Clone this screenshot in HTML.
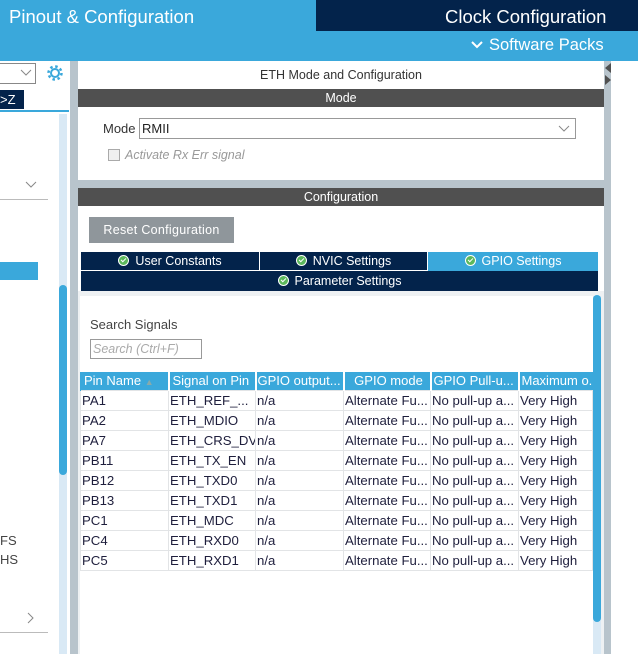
<!DOCTYPE html>
<html><head><style>
*{margin:0;padding:0;box-sizing:border-box}
body{width:638px;height:654px;overflow:hidden;background:#fff;font-family:"Liberation Sans",sans-serif;position:relative;color:#333}
.a{position:absolute}
.t{font-size:13px;white-space:nowrap}
table{border-collapse:collapse;table-layout:fixed;width:512px;position:absolute;left:80px;top:372px;font-size:13.2px;color:#1e1e3c}
td{height:20px;border:1px solid #e2e4e6;padding:0 0 0 1px;white-space:nowrap;overflow:hidden}
th{height:18px;background:#3aa8db;color:#fff;font-weight:normal;border-left:2px solid #fff;text-align:left;padding:0 0 0 3px;white-space:nowrap;overflow:hidden;font-size:13px}
.ok{display:inline-block;width:11px;height:11px;border-radius:50%;background:#5cb85c;vertical-align:-1px;margin-right:6px;position:relative;border:1px solid #fff}
.ok:after{content:"";position:absolute;left:2px;top:1.5px;width:4px;height:2px;border-left:1.6px solid #fff;border-bottom:1.6px solid #fff;transform:rotate(-45deg)}
</style></head><body>
<div class="a" style="left:0;top:0;width:638px;height:61px;background:#3aa8db"></div>
<div class="a" style="left:316px;top:0;width:322px;height:31px;background:#03234b"></div>
<div class="a" style="left:9px;top:6px;color:#fff;font-size:18.5px">Pinout &amp; Configuration</div>
<div class="a" style="left:445px;top:6px;color:#fff;font-size:18.5px">Clock Configuration</div>
<div class="a" style="left:471px;top:36px;color:#fff;font-size:16.5px"><svg width="12" height="10" style="margin-right:6px"><path d="M1 2 L6 7 L11 2" stroke="#fff" stroke-width="2" fill="none"/></svg>Software Packs</div>
<!-- left panel -->
<div class="a" style="left:0;top:63px;width:36px;height:21px;border:1px solid #888;border-left:none"></div>
<svg class="a" style="left:20px;top:69px" width="12" height="8"><path d="M1 1 L6 6 L11 1" stroke="#888" fill="none"/></svg>
<svg class="a" style="left:46px;top:64px" width="18" height="18"><circle cx="9" cy="9" r="4" stroke="#3aa8db" stroke-width="2" fill="none"/><circle cx="9" cy="9" r="6.5" stroke="#3aa8db" stroke-width="2.5" fill="none" stroke-dasharray="2.5 2.6"/></svg>
<div class="a" style="left:0;top:90px;width:24px;height:19px;background:#03234b;color:#fff;font-size:13px;line-height:19px">&gt;Z</div>
<div class="a" style="left:0;top:110px;width:69px;height:2px;background:#3aa8db"></div>
<svg class="a" style="left:25px;top:181px" width="12" height="8"><path d="M1 1 L6 6 L11 1" stroke="#888" fill="none"/></svg>
<div class="a" style="left:0;top:199px;width:48px;height:1px;background:#bbb"></div>
<div class="a" style="left:0;top:262px;width:38px;height:18px;background:#3aa8db"></div>
<div class="a t" style="left:0;top:533px;font-size:13px;color:#444">FS</div>
<div class="a t" style="left:0;top:552px;font-size:13px;color:#444">HS</div>
<svg class="a" style="left:27px;top:612px" width="8" height="12"><path d="M1 1 L6 6 L1 11" stroke="#888" fill="none"/></svg>
<div class="a" style="left:0;top:632px;width:48px;height:1px;background:#bbb"></div>
<div class="a" style="left:59px;top:114px;width:8px;height:540px;background:#d9e9f5"></div>
<div class="a" style="left:59px;top:285px;width:8px;height:190px;background:#3aa8db;border-radius:4px"></div>
<div class="a" style="left:70px;top:61px;width:8px;height:593px;background:#b8c4cc"></div>
<!-- main -->
<div class="a t" style="left:78px;top:68px;width:526px;text-align:center;font-size:12.5px;color:#333">ETH Mode and Configuration</div>
<div class="a" style="left:78px;top:89px;width:526px;height:18px;background:#505050;color:#fff;font-size:12.5px;text-align:center;line-height:18px">Mode</div>
<div class="a t" style="left:103px;top:121px;color:#333">Mode</div>
<div class="a" style="left:139px;top:118px;width:437px;height:21px;border:1px solid #999;font-size:13px;line-height:19px;padding-left:2px;color:#222">RMII</div>
<svg class="a" style="left:558px;top:125px" width="12" height="8"><path d="M1 1 L6 6 L11 1" stroke="#888" fill="none"/></svg>
<div class="a" style="left:108px;top:149px;width:12px;height:12px;border:1px solid #aaa;background:#f0f0f0"></div>
<div class="a t" style="left:125px;top:148px;font-style:italic;color:#999;font-size:12.5px">Activate Rx Err signal</div>
<div class="a" style="left:78px;top:180px;width:526px;height:8px;background:#b8c4cc"></div>
<div class="a" style="left:78px;top:188px;width:526px;height:18px;background:#505050;color:#fff;font-size:12.5px;text-align:center;line-height:18px">Configuration</div>
<div class="a" style="left:89px;top:217px;width:145px;height:26px;background:#8f969b;color:#fff;font-size:12.5px;text-align:center;line-height:26px;letter-spacing:.3px">Reset Configuration</div>
<div class="a" style="left:81px;top:252px;width:178px;height:18px;background:#03234b;color:#fff;font-size:12.5px;text-align:center;line-height:18px"><span class="ok"></span>User Constants</div>
<div class="a" style="left:260px;top:252px;width:167px;height:18px;background:#03234b;color:#fff;font-size:12.5px;text-align:center;line-height:18px"><span class="ok"></span>NVIC Settings</div>
<div class="a" style="left:428px;top:252px;width:170px;height:20px;background:#3aa8db;color:#fff;font-size:12.5px;text-align:center;line-height:18px"><span class="ok"></span>GPIO Settings</div>
<div class="a" style="left:81px;top:271px;width:517px;height:20px;background:#03234b;color:#fff;font-size:12.5px;text-align:center;line-height:20px"><span class="ok"></span>Parameter Settings</div>
<div class="a" style="left:78px;top:291px;width:526px;height:5px;background:#eef1f3"></div>
<div class="a" style="left:78px;top:291px;width:2px;height:363px;background:#eef1f3"></div>
<div class="a" style="left:593px;top:296px;width:8px;height:358px;background:#d9e9f5"></div>
<div class="a" style="left:593px;top:295px;width:8px;height:327px;background:#3aa8db;border-radius:4px"></div>
<div class="a" style="left:601px;top:291px;width:4px;height:363px;background:#eef1f3"></div>
<div class="a" style="left:604px;top:61px;width:7px;height:593px;background:#b8c4cc"></div>
<svg class="a" style="left:604px;top:63px" width="7" height="30"><path d="M7 0 L1 5 L7 10Z M1 12 L7 17 L1 22Z" fill="#505050"/></svg>
<div class="a t" style="left:90px;top:317px;color:#444">Search Signals</div>
<div class="a" style="left:90px;top:339px;width:112px;height:20px;border:1px solid #999;font-style:italic;color:#aaa;font-size:12.5px;line-height:18px;padding-left:2px">Search (Ctrl+F)</div>
<table>
<colgroup><col style="width:88px"><col style="width:87px"><col style="width:88px"><col style="width:87px"><col style="width:88px"><col style="width:74px"></colgroup>
<tr><th style="border-left:1px solid #3aa8db">Pin Name <span style="color:#8aa;font-size:9px">&#9650;</span></th><th>Signal on Pin</th><th style="padding-left:1px">GPIO output...</th><th style="text-align:center">GPIO mode</th><th style="padding-left:2px">GPIO Pull-u...</th><th style="padding-left:2px">Maximum o.</th></tr>
<tr><td>PA1</td><td>ETH_REF_...</td><td>n/a</td><td>Alternate Fu...</td><td>No pull-up a...</td><td>Very High</td></tr>
<tr><td>PA2</td><td>ETH_MDIO</td><td>n/a</td><td>Alternate Fu...</td><td>No pull-up a...</td><td>Very High</td></tr>
<tr><td>PA7</td><td>ETH_CRS_DV</td><td>n/a</td><td>Alternate Fu...</td><td>No pull-up a...</td><td>Very High</td></tr>
<tr><td>PB11</td><td>ETH_TX_EN</td><td>n/a</td><td>Alternate Fu...</td><td>No pull-up a...</td><td>Very High</td></tr>
<tr><td>PB12</td><td>ETH_TXD0</td><td>n/a</td><td>Alternate Fu...</td><td>No pull-up a...</td><td>Very High</td></tr>
<tr><td>PB13</td><td>ETH_TXD1</td><td>n/a</td><td>Alternate Fu...</td><td>No pull-up a...</td><td>Very High</td></tr>
<tr><td>PC1</td><td>ETH_MDC</td><td>n/a</td><td>Alternate Fu...</td><td>No pull-up a...</td><td>Very High</td></tr>
<tr><td>PC4</td><td>ETH_RXD0</td><td>n/a</td><td>Alternate Fu...</td><td>No pull-up a...</td><td>Very High</td></tr>
<tr><td>PC5</td><td>ETH_RXD1</td><td>n/a</td><td>Alternate Fu...</td><td>No pull-up a...</td><td>Very High</td></tr>
</table>
</body></html>
